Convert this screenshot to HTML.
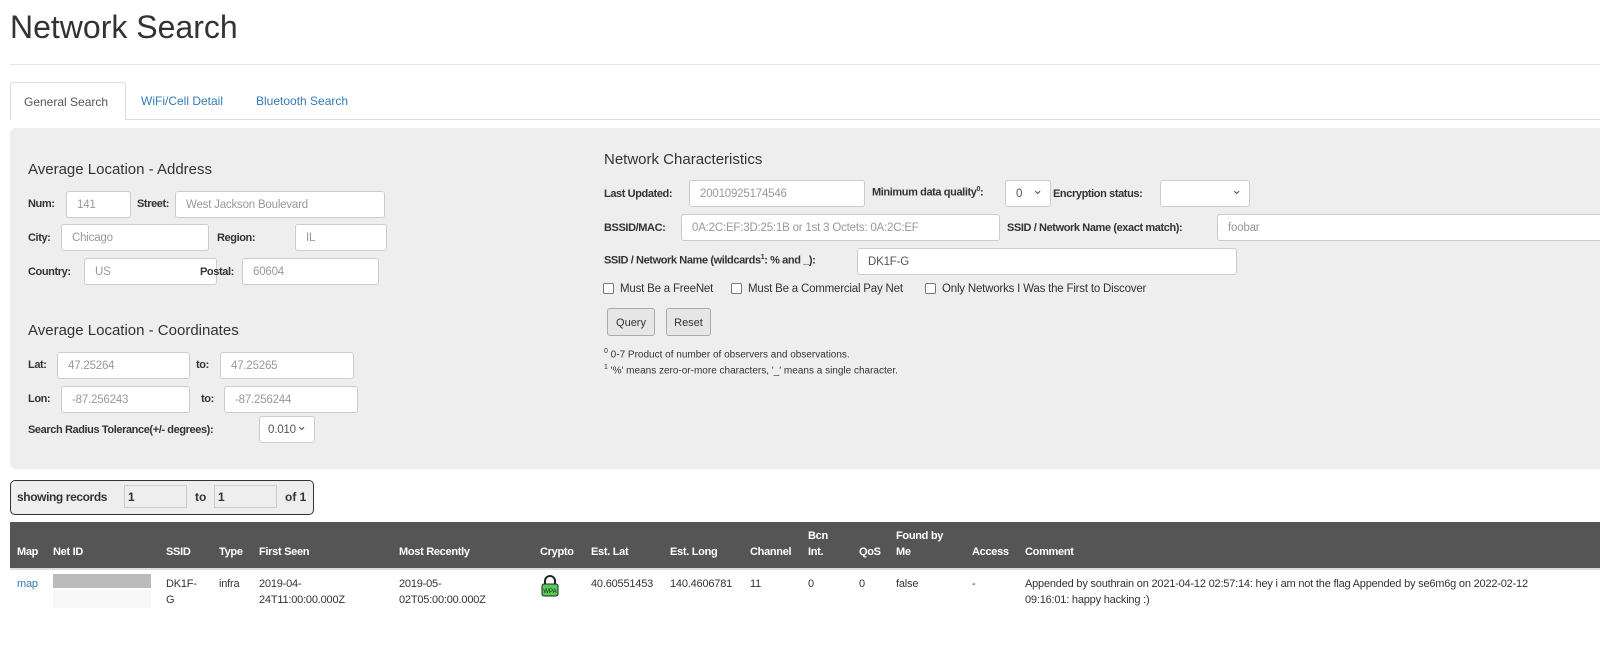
<!DOCTYPE html>
<html><head><meta charset="utf-8"><style>
*{box-sizing:border-box}
body{margin:0;width:1600px;height:646px;overflow:hidden;background:#fff;font-family:"Liberation Sans",sans-serif;color:#333;position:relative}
.a{position:absolute;white-space:nowrap}
.l{position:absolute;font-size:11px;font-weight:bold;color:#333;white-space:nowrap;letter-spacing:-0.4px}
.i{position:absolute;height:27px;background:#fff;border:1px solid #ccc;border-radius:3px;font-size:11.5px;color:#999;padding:7px 0 0 10px;white-space:nowrap;overflow:hidden;letter-spacing:-0.2px}
.sel:after{content:"⌄";position:absolute;right:7px;top:1px;color:#555;font-size:13px}
.h{position:absolute;font-size:15px;color:#333}
.cb{display:inline-block;width:11px;height:11px;border:1px solid #777;border-radius:2px;vertical-align:-2px;margin-right:6px;background:#fff}
.btn{position:absolute;height:28px;background:#e6e6e6;border:1px solid #aaa;border-radius:3px;font-size:11px;color:#333;text-align:center;padding-top:8px}
.th{position:absolute;color:#fff;font-weight:bold;font-size:11px;white-space:nowrap;line-height:16px;letter-spacing:-0.3px}
.td{position:absolute;font-size:11px;color:#333;line-height:16px;white-space:nowrap;letter-spacing:-0.2px}
</style></head><body>
<div class="a" style="left:10px;top:9px;font-size:32px;color:#333">Network Search</div>
<div class="a" style="left:10px;top:64px;width:1590px;border-top:1px solid #e5e5e5"></div>
<div class="a" style="left:10px;top:119px;width:1590px;border-top:1px solid #ddd"></div>
<div class="a" style="left:10px;top:82px;width:116px;height:38px;border:1px solid #ddd;border-bottom:none;border-radius:4px 4px 0 0;background:#fff;font-size:12px;color:#555;padding:12px 0 0 13px">General Search</div>
<div class="a" style="left:141px;top:94px;font-size:12px;color:#337ab7">WiFi/Cell Detail</div>
<div class="a" style="left:256px;top:94px;font-size:12px;color:#337ab7">Bluetooth Search</div>
<div class="a" style="left:10px;top:128px;width:1600px;height:341px;background:#eee;border-radius:6px"></div>

<div class="h" style="left:28px;top:161px">Average Location - Address</div>
<div class="l" style="left:28px;top:198px">Num:</div><div class="i" style="left:66px;top:191px;width:65px">141</div>
<div class="l" style="left:137px;top:198px">Street:</div><div class="i" style="left:175px;top:191px;width:210px">West Jackson Boulevard</div>
<div class="l" style="left:28px;top:232px">City:</div><div class="i" style="left:61px;top:224px;width:148px">Chicago</div>
<div class="l" style="left:217px;top:232px">Region:</div><div class="i" style="left:295px;top:224px;width:92px">IL</div>
<div class="l" style="left:28px;top:266px">Country:</div><div class="i" style="left:84px;top:258px;width:133px">US</div>
<div class="l" style="left:200px;top:266px">Postal:</div><div class="i" style="left:242px;top:258px;width:137px">60604</div>

<div class="h" style="left:28px;top:322px">Average Location - Coordinates</div>
<div class="l" style="left:28px;top:359px">Lat:</div><div class="i" style="left:57px;top:352px;width:133px">47.25264</div>
<div class="l" style="left:196px;top:359px">to:</div><div class="i" style="left:220px;top:352px;width:134px">47.25265</div>
<div class="l" style="left:28px;top:393px">Lon:</div><div class="i" style="left:61px;top:386px;width:129px">-87.256243</div>
<div class="l" style="left:201px;top:393px">to:</div><div class="i" style="left:224px;top:386px;width:134px">-87.256244</div>
<div class="l" style="left:28px;top:424px">Search Radius Tolerance(+/- degrees):</div><div class="i sel" style="left:259px;top:416px;width:56px;color:#555;padding-left:8px">0.010</div>

<div class="h" style="left:604px;top:151px">Network Characteristics</div>
<div class="l" style="left:604px;top:188px">Last Updated:</div><div class="i" style="left:689px;top:180px;width:176px">20010925174546</div>
<div class="l" style="left:872px;top:186px">Minimum data quality<sup style="font-size:7px">0</sup>:</div><div class="i sel" style="left:1005px;top:180px;width:46px;color:#555">0</div>
<div class="l" style="left:1053px;top:188px">Encryption status:</div><div class="i sel" style="left:1160px;top:180px;width:90px"></div>
<div class="l" style="left:604px;top:222px">BSSID/MAC:</div><div class="i" style="left:681px;top:214px;width:319px">0A:2C:EF:3D:25:1B or 1st 3 Octets: 0A:2C:EF</div>
<div class="l" style="left:1007px;top:222px">SSID / Network Name (exact match):</div><div class="i" style="left:1217px;top:214px;width:400px">foobar</div>
<div class="l" style="left:604px;top:254px">SSID / Network Name (wildcards<sup style="font-size:7px">1</sup>: % and _):</div><div class="i" style="left:857px;top:248px;width:380px;color:#555">DK1F-G</div>
<div class="a" style="left:603px;top:283px;font-size:11.5px;letter-spacing:-0.2px"><span class="cb"></span>Must Be a FreeNet</div>
<div class="a" style="left:731px;top:283px;font-size:11.5px;letter-spacing:-0.2px"><span class="cb"></span>Must Be a Commercial Pay Net</div>
<div class="a" style="left:925px;top:283px;font-size:11.5px;letter-spacing:-0.2px"><span class="cb"></span>Only Networks I Was the First to Discover</div>
<div class="btn" style="left:607px;top:308px;width:48px">Query</div>
<div class="btn" style="left:666px;top:308px;width:45px">Reset</div>
<div class="a" style="left:604px;top:348px;font-size:10px"><sup style="font-size:7px">0</sup> 0-7 Product of number of observers and observations.</div>
<div class="a" style="left:604px;top:364px;font-size:10px"><sup style="font-size:7px">1</sup> '%' means zero-or-more characters, '_' means a single character.</div>

<div class="a" style="left:10px;top:480px;width:304px;height:35px;border:1px solid #333;border-radius:5px;background:#eee"></div>
<div class="a" style="left:17px;top:490px;font-size:12px;font-weight:bold;letter-spacing:-0.4px">showing records</div>
<div class="a" style="left:124px;top:485px;width:63px;height:23px;background:#eee;border:1px solid #ccc;font-size:12px;font-weight:bold;padding:4px 3px">1</div>
<div class="a" style="left:195px;top:490px;font-size:12px;font-weight:bold">to</div>
<div class="a" style="left:214px;top:485px;width:63px;height:23px;background:#eee;border:1px solid #ccc;font-size:12px;font-weight:bold;padding:4px 3px">1</div>
<div class="a" style="left:285px;top:490px;font-size:12px;font-weight:bold">of 1</div>

<div class="a" style="left:10px;top:522px;width:1600px;height:46px;background:#555"></div>
<div class="a" style="left:10px;top:568px;width:1600px;border-top:2px solid #ddd"></div>
<div class="th" style="left:17px;top:544px">Map</div>
<div class="th" style="left:53px;top:544px">Net ID</div>
<div class="th" style="left:166px;top:544px">SSID</div>
<div class="th" style="left:219px;top:544px">Type</div>
<div class="th" style="left:259px;top:544px">First Seen</div>
<div class="th" style="left:399px;top:544px">Most Recently</div>
<div class="th" style="left:540px;top:544px">Crypto</div>
<div class="th" style="left:591px;top:544px">Est. Lat</div>
<div class="th" style="left:670px;top:544px">Est. Long</div>
<div class="th" style="left:750px;top:544px">Channel</div>
<div class="th" style="left:808px;top:528px">Bcn<br>Int.</div>
<div class="th" style="left:859px;top:544px">QoS</div>
<div class="th" style="left:896px;top:528px">Found by<br>Me</div>
<div class="th" style="left:972px;top:544px">Access</div>
<div class="th" style="left:1025px;top:544px">Comment</div>

<div class="td" style="left:17px;top:576px;color:#337ab7">map</div>
<div class="a" style="left:53px;top:574px;width:98px;height:14px;background:#bbb"></div>
<div class="a" style="left:53px;top:590px;width:98px;height:18px;background:#f8f8f8"></div>
<div class="td" style="left:166px;top:576px">DK1F-<br>G</div>
<div class="td" style="left:219px;top:576px">infra</div>
<div class="td" style="left:259px;top:576px">2019-04-<br>24T11:00:00.000Z</div>
<div class="td" style="left:399px;top:576px">2019-05-<br>02T05:00:00.000Z</div>
<svg class="a" style="left:540px;top:575px" width="20" height="22" viewBox="0 0 20 22"><path d="M5 9V6a5 5 0 0 1 10 0v3" fill="none" stroke="#222" stroke-width="2"/><rect x="2" y="9" width="16" height="12" rx="2" fill="#5c5" stroke="#222"/><text x="10" y="18" font-size="6" text-anchor="middle" font-family="Liberation Sans" fill="#222">WPA</text></svg>
<div class="td" style="left:591px;top:576px">40.60551453</div>
<div class="td" style="left:670px;top:576px">140.4606781</div>
<div class="td" style="left:750px;top:576px">11</div>
<div class="td" style="left:808px;top:576px">0</div>
<div class="td" style="left:859px;top:576px">0</div>
<div class="td" style="left:896px;top:576px">false</div>
<div class="td" style="left:972px;top:576px">-</div>
<div class="td" style="left:1025px;top:576px">Appended by southrain on 2021-04-12 02:57:14: hey i am not the flag Appended by se6m6g on 2022-02-12<br>09:16:01: happy hacking :)</div>
</body></html>
